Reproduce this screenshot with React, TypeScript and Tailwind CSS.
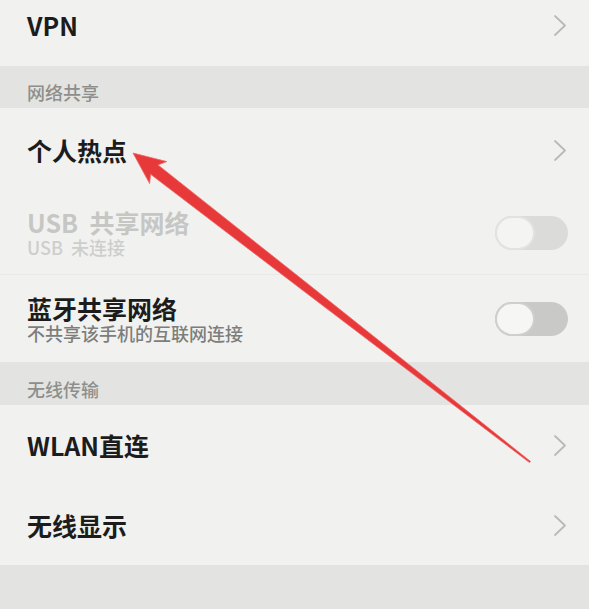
import React from "react";

const font = {
  fontFamily: '"Noto Sans CJK SC", "Noto Sans", sans-serif',
};

function Chevron() {
  return (
    <svg width="14" height="23" viewBox="0 0 14 23" fill="none" className="shrink-0">
      <path
        d="M2 2L12 11.5L2 21"
        stroke="#b9bab8"
        strokeWidth={1.8}
        strokeLinecap="round"
        strokeLinejoin="round"
      />
    </svg>
  );
}

function Toggle({ disabled }: { disabled?: boolean }) {
  return (
    <div
      className={`relative w-[73px] h-[34px] rounded-full shrink-0 ${
        disabled ? "bg-[#dbdcda]" : "bg-[#c9cac8]"
      }`}
    >
      <div
        className={`absolute left-0 top-0 w-[40px] h-[34px] rounded-full border-2 ${
          disabled
            ? "bg-[#f4f5f3] border-[#e2e3e1]"
            : "bg-[#f6f7f5] border-[#cfd0ce]"
        }`}
      />
    </div>
  );
}

function SectionHeader({ title, height }: { title: string; height: string }) {
  return (
    <div className={`${height} bg-[#e3e4e2] flex items-end pl-[27px] pb-[4px]`}>
      <span className="text-[18px] leading-[24px] font-medium text-[#8e8f8d]">
        {title}
      </span>
    </div>
  );
}

function NavRow({ title, height }: { title: string; height: string }) {
  return (
    <div className={`${height} flex items-center justify-between pl-[27px] pr-[22px]`}>
      <span className="text-[25px] leading-[30px] font-bold text-[#1c1c1c]">
        {title}
      </span>
      <Chevron />
    </div>
  );
}

function SwitchRow({
  title,
  sub,
  height,
  disabled,
  divider,
}: {
  title: string;
  sub: string;
  height: string;
  disabled?: boolean;
  divider?: boolean;
}) {
  return (
    <div
      className={`${height} flex items-center justify-between pl-[27px] pr-[21px] ${
        divider ? "border-b border-[#e9eae8]" : ""
      }`}
    >
      <div className="flex flex-col gap-[2px]">
        <span
          className={`text-[25px] leading-[26px] font-bold whitespace-pre ${
            disabled ? "text-[#c6c7c5]" : "text-[#1c1c1c]"
          }`}
        >
          {title}
        </span>
        <span
          className={`text-[18px] leading-[20px] font-medium whitespace-pre ${
            disabled ? "text-[#cdcecc]" : "text-[#7d7e7c]"
          }`}
        >
          {sub}
        </span>
      </div>
      <Toggle disabled={disabled} />
    </div>
  );
}

export default function App() {
  // 红色箭头：尖端在“个人热点”右侧，向右下渐细
  const arrow =
    "133,153 166.8,161.6 158,164.9 311.5,286.8 530.5,461.4 529.5,462.6 306.5,293.2 150.6,174.3 149.6,183.6";

  return (
    <div className="relative w-[589px] h-[609px] overflow-hidden bg-[#f1f2f0]" style={font}>
      <div className="h-[66px] flex items-center justify-between pl-[27px] pr-[22px] pb-[16px]">
        <span className="text-[25px] leading-[30px] font-bold text-[#1c1c1c]">VPN</span>
        <Chevron />
      </div>

      <SectionHeader title="网络共享" height="h-[42px]" />
      <NavRow title="个人热点" height="h-[84px]" />
      <SwitchRow title="USB  共享网络" sub="USB  未连接" height="h-[83px]" disabled divider />
      <SwitchRow title="蓝牙共享网络" sub="不共享该手机的互联网连接" height="h-[87px]" />

      <SectionHeader title="无线传输" height="h-[43px]" />
      <NavRow title="WLAN直连" height="h-[80px]" />
      <NavRow title="无线显示" height="h-[80px]" />
      <div className="h-[44px] bg-[#e3e4e2]" />

      <svg
        className="absolute left-0 top-0 pointer-events-none"
        width="589"
        height="609"
        viewBox="0 0 589 609"
      >
        <polygon
          points={arrow}
          fill="#e8393a"
          stroke="#ef6a6a"
          strokeWidth={0.8}
          strokeLinejoin="round"
        />
      </svg>
    </div>
  );
}
